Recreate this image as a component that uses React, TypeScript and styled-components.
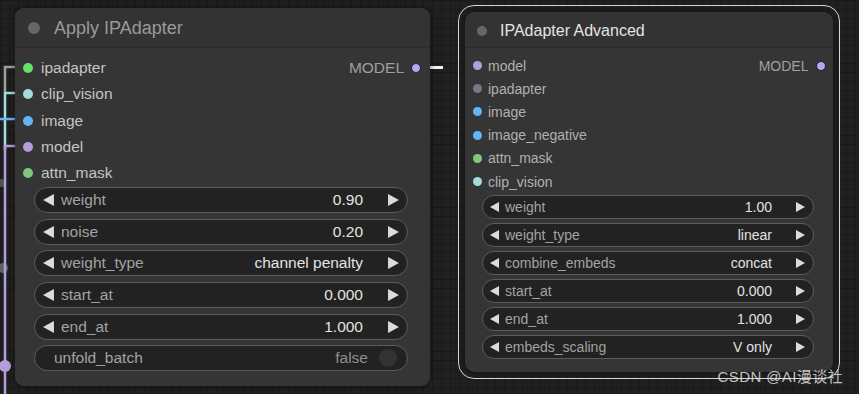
import React from "react";
import styled, { createGlobalStyle } from "styled-components";

const GlobalStyle = createGlobalStyle`
  html, body {
    margin: 0;
    padding: 0;
    background: #1f1f1f;
  }
  body {
    font-family: "Liberation Sans", Arial, sans-serif;
  }
`;

type Slot = { name: string; color: string };
type Field = { label: string; value: string; toggle?: boolean };

const applySlots: Slot[] = [
  { name: "ipadapter", color: "#66e266" },
  { name: "clip_vision", color: "#a6dbdc" },
  { name: "image", color: "#64b5f6" },
  { name: "model", color: "#b39ddb" },
  { name: "attn_mask", color: "#7fc77f" },
];

const applyFields: Field[] = [
  { label: "weight", value: "0.90" },
  { label: "noise", value: "0.20" },
  { label: "weight_type", value: "channel penalty" },
  { label: "start_at", value: "0.000" },
  { label: "end_at", value: "1.000" },
  { label: "unfold_batch", value: "false", toggle: true },
];

const advSlots: Slot[] = [
  { name: "model", color: "#b39ddb" },
  { name: "ipadapter", color: "#7b7681" },
  { name: "image", color: "#64b5f6" },
  { name: "image_negative", color: "#64b5f6" },
  { name: "attn_mask", color: "#7fc77f" },
  { name: "clip_vision", color: "#a6dbdc" },
];

const advFields: Field[] = [
  { label: "weight", value: "1.00" },
  { label: "weight_type", value: "linear" },
  { label: "combine_embeds", value: "concat" },
  { label: "start_at", value: "0.000" },
  { label: "end_at", value: "1.000" },
  { label: "embeds_scaling", value: "V only" },
];

const Arrow: React.FC<{ dir: "left" | "right"; size: number }> = ({ dir, size }) => (
  <svg width={size} height={size + 1} viewBox="0 0 10 11">
    {dir === "left" ? (
      <polygon points="10,0 10,11 0,5.5" fill="#dcdcdc" />
    ) : (
      <polygon points="0,0 0,11 10,5.5" fill="#dcdcdc" />
    )}
  </svg>
);

const NodeView: React.FC<{
  big?: boolean;
  title: string;
  slots: Slot[];
  fields: Field[];
}> = ({ big, title, slots, fields }) => (
  <Node $big={big}>
    <Title $big={big}>
      <TitleDot $big={big} />
      {title}
    </Title>
    <Slots $big={big}>
      {slots.map((s, i) => (
        <SlotRow key={s.name} $big={big}>
          <SlotDot $color={s.color} $big={big} />
          <SlotName $big={big}>{s.name}</SlotName>
          {i === 0 && (
            <Output>
              MODEL
              <OutDot />
            </Output>
          )}
        </SlotRow>
      ))}
    </Slots>
    <Fields $big={big}>
      {fields.map((f) =>
        f.toggle ? (
          <Widget key={f.label} $big={big} $toggle>
            <Label>{f.label}</Label>
            <ToggleValue>{f.value}</ToggleValue>
            <Knob />
          </Widget>
        ) : (
          <Widget key={f.label} $big={big}>
            <Arrow dir="left" size={big ? 11 : 9} />
            <Label>{f.label}</Label>
            <Value $big={big}>{f.value}</Value>
            <Arrow dir="right" size={big ? 11 : 9} />
          </Widget>
        )
      )}
    </Fields>
  </Node>
);

const App: React.FC = () => (
  <>
    <GlobalStyle />
    <Canvas>
      <Wires width="20" height="394" viewBox="0 0 20 394">
        <circle cx="1" cy="183" r="4" fill="#4d524d" />
        <circle cx="3" cy="268" r="5" fill="#586460" />
        <path d="M15 67 H5 V92" stroke="#9aa09a" strokeWidth="2.5" fill="none" />
        <path d="M15 93 H5 V150" stroke="#a6dbdc" strokeWidth="2.5" fill="none" />
        <path d="M0 119 H15" stroke="#64b5f6" strokeWidth="2.5" fill="none" />
        <path d="M15 146 H5 V394" stroke="#b39ddb" strokeWidth="2.5" fill="none" />
        <circle cx="5" cy="366" r="6" fill="#b39ddb" />
      </Wires>
      <Link />
      <LeftSlot>
        <NodeView big title="Apply IPAdapter" slots={applySlots} fields={applyFields} />
      </LeftSlot>
      <Selected>
        <NodeView title="IPAdapter Advanced" slots={advSlots} fields={advFields} />
      </Selected>
      <Watermark>CSDN @AI漫谈社</Watermark>
    </Canvas>
  </>
);

export default App;

const Canvas = styled.div`
  position: relative;
  width: 859px;
  height: 394px;
  overflow: hidden;
  background-color: #202020;
  background-image: linear-gradient(rgba(0, 0, 0, 0.18) 1px, transparent 1px),
    linear-gradient(90deg, rgba(0, 0, 0, 0.18) 1px, transparent 1px);
  background-size: 9px 9px;
`;

const Wires = styled.svg`
  position: absolute;
  left: 0;
  top: 0;
`;

const Link = styled.div`
  position: absolute;
  left: 430px;
  top: 66px;
  width: 13px;
  height: 3px;
  background: #f2f2f2;
`;

const LeftSlot = styled.div`
  position: absolute;
  left: 15px;
  top: 8px;
`;

const Selected = styled.div`
  position: absolute;
  left: 458px;
  top: 5px;
  padding: 6px;
  border: 1.5px solid #d8d8d8;
  border-radius: 16px;
`;

const Node = styled.div<{ $big?: boolean }>`
  width: ${(p) => (p.$big ? 415 : 368)}px;
  height: ${(p) => (p.$big ? 378 : 360)}px;
  box-sizing: border-box;
  background: #353535;
  border-radius: ${(p) => (p.$big ? 9 : 10)}px;
  box-shadow: 0 0 6px rgba(0, 0, 0, 0.5);
  display: flex;
  flex-direction: column;
`;

const Title = styled.div<{ $big?: boolean }>`
  height: ${(p) => (p.$big ? 40 : 36)}px;
  box-sizing: border-box;
  display: flex;
  align-items: center;
  gap: ${(p) => (p.$big ? 14 : 13)}px;
  padding: ${(p) => (p.$big ? "1px 0 0 13px" : "3px 0 0 12px")};
  font-size: ${(p) => (p.$big ? 18 : 16)}px;
  color: ${(p) => (p.$big ? "#9a9a9a" : "#e4e4e4")};
  background: #333333;
  border-bottom: 1px solid #2b2b2b;
  border-radius: ${(p) => (p.$big ? 9 : 10)}px ${(p) => (p.$big ? 9 : 10)}px 0 0;
`;

const TitleDot = styled.span<{ $big?: boolean }>`
  width: ${(p) => (p.$big ? 12 : 10)}px;
  height: ${(p) => (p.$big ? 12 : 10)}px;
  border-radius: 50%;
  background: #666;
`;

const Slots = styled.div<{ $big?: boolean }>`
  display: flex;
  flex-direction: column;
  padding-top: ${(p) => (p.$big ? 7 : 6)}px;
`;

const SlotRow = styled.div<{ $big?: boolean }>`
  height: ${(p) => (p.$big ? 26.25 : 23.2)}px;
  display: flex;
  align-items: center;
  gap: ${(p) => (p.$big ? 8 : 6.5)}px;
  padding-left: ${(p) => (p.$big ? 8 : 7.5)}px;
  padding-right: ${(p) => (p.$big ? 9 : 7.5)}px;
  font-size: ${(p) => (p.$big ? 15.5 : 14)}px;
  color: #b4b4b4;
`;

const SlotDot = styled.span<{ $color: string; $big?: boolean }>`
  width: ${(p) => (p.$big ? 10 : 9)}px;
  height: ${(p) => (p.$big ? 10 : 9)}px;
  border-radius: 50%;
  background: ${(p) => p.$color};
  flex-shrink: 0;
`;

const SlotName = styled.span<{ $big?: boolean }>`
  flex: 1;
  color: ${(p) => (p.$big ? "#c4c4c4" : "#b0b0b0")};
`;

const Output = styled.span`
  display: flex;
  align-items: center;
  gap: 7px;
  color: #a0a0a0;
`;

const OutDot = styled.span`
  width: 10px;
  height: 10px;
  box-sizing: border-box;
  border-radius: 50%;
  background: #b9a6e6;
  border: 1.5px solid #1d1640;
`;

const Fields = styled.div<{ $big?: boolean }>`
  display: flex;
  flex-direction: column;
  gap: ${(p) => (p.$big ? 5.6 : 4)}px;
  padding: ${(p) => (p.$big ? "1px 22px 0 19px" : "2px 19px 0 17px")};
`;

const Widget = styled.div<{ $big?: boolean; $toggle?: boolean }>`
  height: ${(p) => (p.$big ? 26 : 24)}px;
  box-sizing: border-box;
  display: flex;
  align-items: center;
  border: 1px solid #5c5c5c;
  border-radius: 14px;
  background: #222222;
  font-size: ${(p) => (p.$big ? 15.5 : 14)}px;
  padding: ${(p) => (p.$toggle ? "0 10px 0 19px" : p.$big ? "0 8px" : "0 8px 0 7px")};
  gap: ${(p) => (p.$big ? 7 : 6)}px;

  svg {
    flex-shrink: 0;
  }
`;

const Label = styled.span`
  flex: 1;
  color: #a2a2a2;
  white-space: nowrap;
`;

const Value = styled.span<{ $big?: boolean }>`
  color: #e2e2e2;
  margin-right: 18px;
  white-space: nowrap;
`;

const ToggleValue = styled.span`
  color: #8e8e8e;
  margin-right: 4px;
`;

const Knob = styled.span`
  width: 18px;
  height: 18px;
  border-radius: 50%;
  background: #333333;
`;

const Watermark = styled.div`
  position: absolute;
  right: 16px;
  bottom: 8px;
  font-family: "Liberation Sans", "Noto Sans CJK SC", sans-serif;
  font-size: 15px;
  color: rgba(235, 235, 235, 0.8);
  letter-spacing: 0.4px;
`;
